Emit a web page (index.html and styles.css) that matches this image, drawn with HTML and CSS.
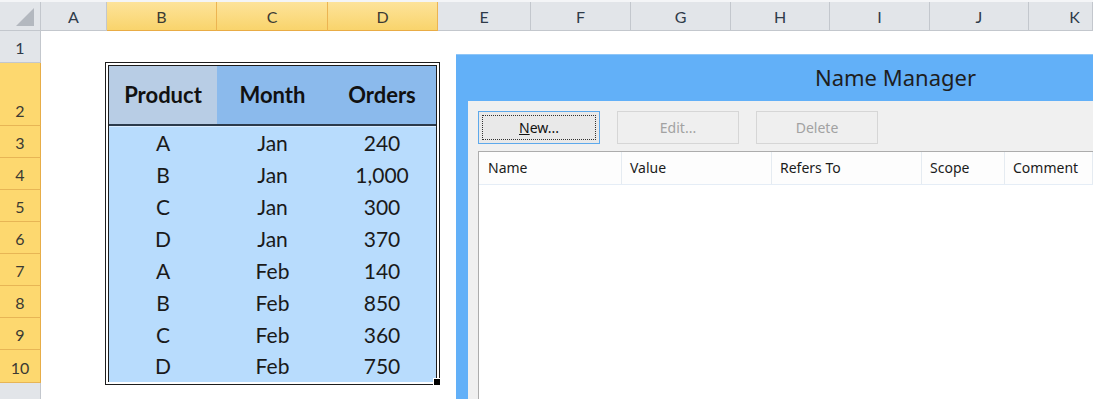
FILE: index.html
```html
<!DOCTYPE html>
<html>
<head>
<meta charset="utf-8">
<title>Name Manager</title>
<link rel="stylesheet" href="styles.css">
</head>
<body>
<div class="sheet">
  <div class="colheads">
    <div class="corner"><span class="tri"></span></div>
    <div class="ch w-a">A</div>
    <div class="ch sel w-b">B</div>
    <div class="ch sel w-c">C</div>
    <div class="ch sel w-d">D</div>
    <div class="ch w-e">E</div>
    <div class="ch w-f">F</div>
    <div class="ch w-g">G</div>
    <div class="ch w-h">H</div>
    <div class="ch w-i">I</div>
    <div class="ch w-j">J</div>
    <div class="ch w-k">K</div>
  </div>
  <div class="grid-body">
    <div class="rowheads">
      <div class="rh h32">1</div>
      <div class="rh sel h63">2</div>
      <div class="rh sel h32">3</div>
      <div class="rh sel h32">4</div>
      <div class="rh sel h32">5</div>
      <div class="rh sel h32">6</div>
      <div class="rh sel h32">7</div>
      <div class="rh sel h32">8</div>
      <div class="rh sel h32">9</div>
      <div class="rh sel h33">10</div>
      <div class="rh-rest"></div>
    </div>
    <div class="cells">
      <div class="range">
        <div class="range-inner">
          <div class="thead">
            <div class="th th-product">Product</div>
            <div class="th th-blue">Month</div>
            <div class="th th-blue">Orders</div>
          </div>
          <div class="tbody">
            <div class="td">A</div><div class="td">Jan</div><div class="td">240</div>
            <div class="td">B</div><div class="td">Jan</div><div class="td">1,000</div>
            <div class="td">C</div><div class="td">Jan</div><div class="td">300</div>
            <div class="td">D</div><div class="td">Jan</div><div class="td">370</div>
            <div class="td">A</div><div class="td">Feb</div><div class="td">140</div>
            <div class="td">B</div><div class="td">Feb</div><div class="td">850</div>
            <div class="td">C</div><div class="td">Feb</div><div class="td">360</div>
            <div class="td">D</div><div class="td">Feb</div><div class="td">750</div>
          </div>
        </div>
        <span class="fill-handle"></span>
      </div>
    </div>
  </div>
</div>

<div class="dialog">
  <div class="titlebar">Name Manager</div>
  <div class="client">
    <div class="toolbar">
      <button class="btn btn-focus" type="button"><span class="focus-ring"><u>N</u>ew...</span></button>
      <button class="btn" type="button" disabled>Edit...</button>
      <button class="btn" type="button" disabled>Delete</button>
    </div>
    <div class="list">
      <div class="lhead">
        <div class="lh lh-name">Name</div>
        <div class="lh lh-value">Value</div>
        <div class="lh lh-refers">Refers To</div>
        <div class="lh lh-scope">Scope</div>
        <div class="lh lh-comment">Comment</div>
      </div>
      <div class="lbody"></div>
    </div>
  </div>
</div>
</body>
</html>
```

FILE: styles.css
```css
* { box-sizing: border-box; }

html, body {
  margin: 0;
  padding: 0;
}

body {
  width: 1093px;
  height: 399px;
  overflow: hidden;
  background: #ffffff;
  font-family: Lato, "Liberation Sans", sans-serif;
  position: relative;
}

/* ---------- spreadsheet ---------- */
.sheet {
  display: flex;
  flex-direction: column;
  height: 399px;
}

.colheads {
  display: flex;
  height: 31px;
  border-top: 2px solid #f4f5f7;
  flex: none;
}

.corner {
  width: 41px;
  flex: none;
  background: #e2e5e9;
  border-right: 1px solid #c3c7cd;
  border-bottom: 1px solid #c3c7cd;
  position: relative;
}

.tri {
  position: absolute;
  right: 6px;
  bottom: 4px;
  width: 0;
  height: 0;
  border-left: 18px solid transparent;
  border-bottom: 18px solid #b3b8bf;
}

.ch {
  flex: none;
  display: flex;
  align-items: center;
  justify-content: center;
  background: #e2e5e9;
  border-right: 1px solid #c3c7cd;
  border-bottom: 1px solid #c3c7cd;
  color: #2f3b49;
  font-size: 16px;
}

.ch.sel {
  background: linear-gradient(#fde39a, #f9d46c);
  border-right-color: #ecb452;
  border-bottom-color: #e9ac45;
  color: #3b3a33;
}

.w-a { width: 66px; }
.w-b { width: 110px; }
.w-c { width: 111px; }
.w-d { width: 110px; }
.w-e { width: 93px; }
.w-f { width: 100px; }
.w-g { width: 100px; }
.w-h { width: 99px; }
.w-i { width: 100px; }
.w-j { width: 99px; }
.w-k { flex: 1 1 auto; min-width: 0; padding-left: 28px; }

.grid-body {
  display: flex;
  flex: 1;
  min-height: 0;
}

.rowheads {
  width: 41px;
  flex: none;
  display: flex;
  flex-direction: column;
}

.rh {
  flex: none;
  display: flex;
  align-items: flex-end;
  justify-content: center;
  padding-bottom: 5px;
  background: #e2e5e9;
  border-right: 1px solid #c3c7cd;
  border-bottom: 1px solid #c3c7cd;
  color: #2f3b49;
  font-size: 16px;
}

.rh.sel {
  background: #fdd86f;
  border-right-color: #e7ad47;
  border-bottom-color: #e7b555;
  color: #3b3a33;
}

.h32 { height: 32px; }
.h33 { height: 33px; }
.h63 { height: 63px; }

.rh-rest {
  flex: 1;
  background: #e2e5e9;
  border-right: 1px solid #c3c7cd;
}

.cells {
  flex: 1;
  padding: 31px 0 0 64px;
}

.range {
  position: relative;
  width: 335px;
  height: 323px;
  border: 1px solid #1d1d1d;
  padding: 2px;
  background: #ffffff;
}

.range-inner {
  height: 100%;
  border: 1px solid #1d1d1d;
  display: flex;
  flex-direction: column;
}

.thead {
  display: grid;
  grid-template-columns: 108px 111px 108px;
  height: 60px;
  border-bottom: 2px solid #2b3a4b;
  flex: none;
}

.th {
  display: flex;
  align-items: center;
  justify-content: center;
  font-weight: 700;
  font-size: 22px;
  color: #111111;
  padding-bottom: 1px;
}

.th-product { background: #b8cde5; }
.th-blue { background: #8bbaec; }

.tbody {
  flex: 1;
  display: grid;
  grid-template-columns: 108px 111px 108px;
  grid-template-rows: repeat(7, 32px) 31px;
  background: #b8dcfd;
  border-top: 1px solid #d9ecff;
}

.td {
  display: flex;
  align-items: center;
  justify-content: center;
  padding-bottom: 2px;
  font-size: 21px;
  color: #1a1a1a;
}

.fill-handle {
  position: absolute;
  right: -2px;
  bottom: -2px;
  width: 6px;
  height: 6px;
  background: #000000;
  border: 1px solid #ffffff;
  box-sizing: content-box;
}

/* ---------- dialog ---------- */
.dialog {
  position: absolute;
  left: 456px;
  top: 54px;
  right: 0;
  bottom: 0;
  background: #62b0f8;
  border-top: 1px solid #8fc6f7;
  padding-left: 12px;
  display: flex;
  flex-direction: column;
  font-family: "Noto Sans", "Open Sans", sans-serif;
}

.titlebar {
  height: 46px;
  flex: none;
  display: flex;
  align-items: center;
  justify-content: center;
  padding-left: 230px;
  padding-bottom: 2px;
  font-size: 22px;
  color: #1e1e1e;
  white-space: nowrap;
}

.client {
  flex: 1;
  min-height: 0;
  background: #f0f0f0;
  padding: 10px 0 0 10px;
  display: flex;
  flex-direction: column;
  gap: 7px;
}

.toolbar {
  display: flex;
  gap: 17px;
}

.btn {
  width: 122px;
  height: 33px;
  margin: 0;
  padding: 0;
  border: 1px solid #d6d6d6;
  background: #efefef;
  font-family: "Noto Sans", "Open Sans", sans-serif;
  font-size: 14px;
  color: #a2a2a2;
  display: flex;
  align-items: center;
  justify-content: center;
}

.btn-focus {
  border-color: #5da9ec;
  background: #e9e9e9;
  color: #111111;
  padding: 3px;
}

.focus-ring {
  width: 100%;
  height: 100%;
  border: 1px dotted #333333;
  display: flex;
  align-items: center;
  justify-content: center;
}

.list {
  flex: 1;
  min-height: 0;
  background: #ffffff;
  border-left: 1px solid #acacac;
  border-top: 1px solid #acacac;
  display: flex;
  flex-direction: column;
  overflow: hidden;
}

.lhead {
  display: flex;
  height: 33px;
  flex: none;
  border-bottom: 1px solid #e5edf6;
  background: #fdfdfd;
}

.lh {
  flex: none;
  display: flex;
  align-items: center;
  padding-left: 8px;
  padding-bottom: 1px;
  border-right: 1px solid #e5ebf1;
  font-size: 14px;
  color: #1b1b1b;
}

.lh-name { width: 143px; padding-left: 9px; }
.lh-value { width: 150px; }
.lh-refers { width: 150px; }
.lh-scope { width: 83px; }
.lh-comment { flex: 1 1 auto; min-width: 0; white-space: nowrap; }

.lbody { flex: 1; }
```
